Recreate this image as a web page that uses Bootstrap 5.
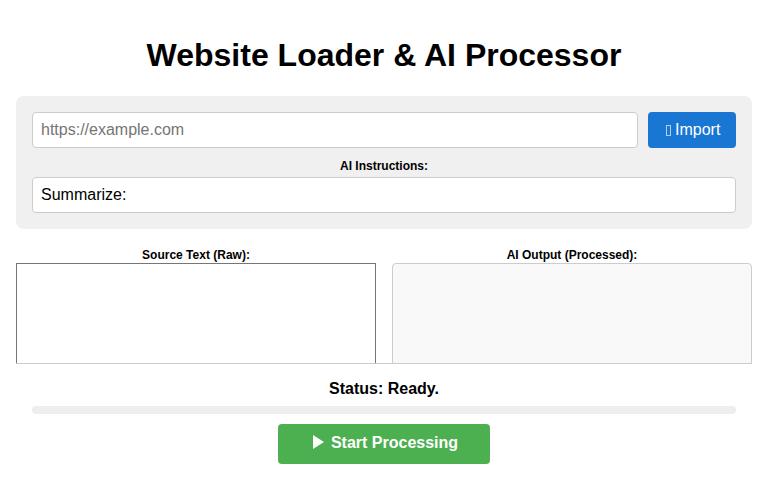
<!DOCTYPE html>
<html lang="en">
<head>
<meta charset="utf-8">
<title>Website Loader &amp; AI Processor</title>
<link href="https://cdn.jsdelivr.net/npm/bootstrap@5.3.0/dist/css/bootstrap.min.css" rel="stylesheet">
<style>
html, body { height: 480px; overflow: hidden; }
body { font-family: "Liberation Sans", Arial, sans-serif; color: #000; background: #fff; }
.app-shell { height: 480px; }
.app-title { font-size: 32px; line-height: 37px; font-weight: 700; margin: 0; padding: 37px 0 22px; }
.top-panel { margin: 0 16px; background: #f0f0f0; border-radius: 8px; padding: 16px; }
.top-row { gap: 10px; }
.url-field, .prompt-field { height: 36px; font-size: 16px; padding: 8px; border: 1px solid #ccc; border-radius: 4px; color: #000; line-height: 18px; }
.url-field::placeholder { color: #757575; opacity: 1; }
.import-btn { height: 36px; width: 88px; background: #1976d2; border: 0; color: #fff; font-size: 16px; border-radius: 4px; padding: 0 0 0 2px; }
.missing-mark { display: inline-block; width: 5px; height: 11px; border: 1px solid rgba(255,255,255,.65); vertical-align: -1px; }
.field-cap { font-size: 12px; line-height: 14px; font-weight: 700; margin: 11px 0 4px; }
.editors { margin: 19px 16px 0; height: 116px; overflow: hidden; gap: 16px; border-bottom: 1px solid #ccc; }
.editor-col { width: 360px; flex: none; }
.col-cap { font-size: 12px; line-height: 14px; font-weight: 700; height: 15px; }
.raw-box, .out-box { display: block; width: 360px; height: 200px; font-size: 14px; padding: 8px; resize: none; }
.raw-box { border: 1px solid #767676; border-radius: 0; background: #fff; outline: 0; }
.out-box { border: 1px solid #ccc; border-radius: 4px; background: #f9f9f9; }
.foot-bar { padding: 0 32px; }
.status-line { font-size: 16px; line-height: 18px; font-weight: 700; margin: 16px 0 8px; }
.track { height: 8px; background: #eee; border-radius: 4px; }
.run-btn { display: block; width: 212px; height: 40px; margin: 10px auto 0; background: #4caf50; border: 0; border-radius: 4px; color: #fff; font-size: 16px; font-weight: 700; padding: 0 0 2px 3px; }
.play-mark { width: 11px; height: 14px; margin-right: 7px; vertical-align: -1px; fill: #fff; }
</style>
</head>
<body>
<div class="app-shell">
  <h1 class="app-title text-center">Website Loader &amp; AI Processor</h1>
  <div class="top-panel">
    <div class="d-flex top-row">
      <input class="url-field flex-grow-1" type="text" placeholder="https://example.com" aria-label="URL">
      <button class="import-btn flex-shrink-0" type="button"><span class="missing-mark" aria-hidden="true"></span> Import</button>
    </div>
    <div class="field-cap text-center">AI Instructions:</div>
    <input class="prompt-field d-block w-100" type="text" value="Summarize:" aria-label="AI Instructions">
  </div>
  <div class="editors d-flex">
    <div class="editor-col">
      <div class="col-cap text-center">Source Text (Raw):</div>
      <textarea class="raw-box" aria-label="Source Text"></textarea>
    </div>
    <div class="editor-col">
      <div class="col-cap text-center">AI Output (Processed):</div>
      <div class="out-box"></div>
    </div>
  </div>
  <div class="foot-bar">
    <div class="status-line text-center">Status: Ready.</div>
    <div class="track"></div>
    <button class="run-btn" type="button"><svg class="play-mark" viewBox="0 0 11 14" aria-hidden="true"><path d="M0 0L11 7L0 14Z"/></svg>Start Processing</button>
  </div>
</div>
<script src="https://cdn.jsdelivr.net/npm/bootstrap@5.3.0/dist/js/bootstrap.bundle.min.js"></script>
</body>
</html>
